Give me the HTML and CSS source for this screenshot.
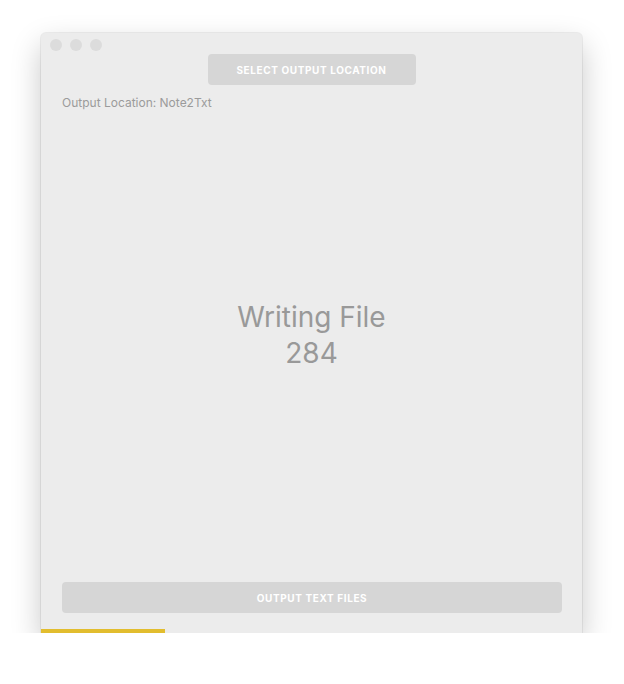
FILE: index.html
```html
<!DOCTYPE html>
<html>
  <head>
    <meta charset="utf-8" />
    <title>Note2Txt</title>
    <link rel="stylesheet" href="styles.css">
  </head>
  <body>
    <div class="window">
      <div class="titlebar">
        <span class="light"></span>
        <span class="light"></span>
        <span class="light"></span>
      </div>
      <div class="top">
        <button class="btn btn-select">SELECT OUTPUT LOCATION</button>
      </div>
      <div class="location">Output Location: Note2Txt</div>
      <div class="status">
        <div>Writing File</div>
        <div>284</div>
      </div>
      <div class="bottom">
        <button class="btn btn-output">OUTPUT TEXT FILES</button>
      </div>
      <div class="progress"><div class="bar" style="width: 23%"></div></div>
    </div>
  </body>
</html>
```

FILE: styles.css
```css
body {
  margin: 0;
  background: #ffffff;
  font-family: "Helvetica Neue", "Liberation Sans", Arial, sans-serif;
}
.window {
  position: relative;
  margin: 33px 0 0 41px;
  width: 541px;
  height: 600px;
  background: #ececec;
  border-radius: 5px 5px 0 0;
  box-shadow: 0 12px 30px rgba(0, 0, 0, 0.22), 0 0 0 1px rgba(0, 0, 0, 0.06);
  display: flex;
  flex-direction: column;
  box-sizing: border-box;
}
.titlebar {
  display: flex;
  gap: 8px;
  padding: 6px 0 0 9px;
  height: 0;
}
.light {
  width: 12px;
  height: 12px;
  border-radius: 50%;
  background: #dcdcdc;
}
.top {
  display: flex;
  justify-content: center;
  padding-top: 21px;
  margin-top: -6px;
}
.btn {
  border: none;
  background: #d6d6d6;
  color: #ffffff;
  font-family: "Inter", "Liberation Sans", sans-serif;
  font-weight: 700;
  font-size: 10px;
  letter-spacing: 0.6px;
  border-radius: 4px;
  height: 31px;
  padding: 0;
}
.btn-select {
  width: 208px;
}
.location {
  margin: 10px 0 0 21px;
  font-size: 12px;
  color: #9b9b9b;
  font-family: "Inter", "Liberation Sans", sans-serif;
}
.status {
  flex: 1;
  display: flex;
  flex-direction: column;
  justify-content: center;
  align-items: center;
  font-family: "Inter", "Liberation Sans", sans-serif;
  font-size: 28px;
  line-height: 36px;
  color: #999999;
  padding-bottom: 23px;
}
.bottom {
  padding: 0 20px 0 21px;
  margin-bottom: 16px;
}
.btn-output {
  width: 100%;
}
.progress {
  height: 4px;
  width: 100%;
}
.bar {
  height: 4px;
  background: #e2bd2e;
}
```
